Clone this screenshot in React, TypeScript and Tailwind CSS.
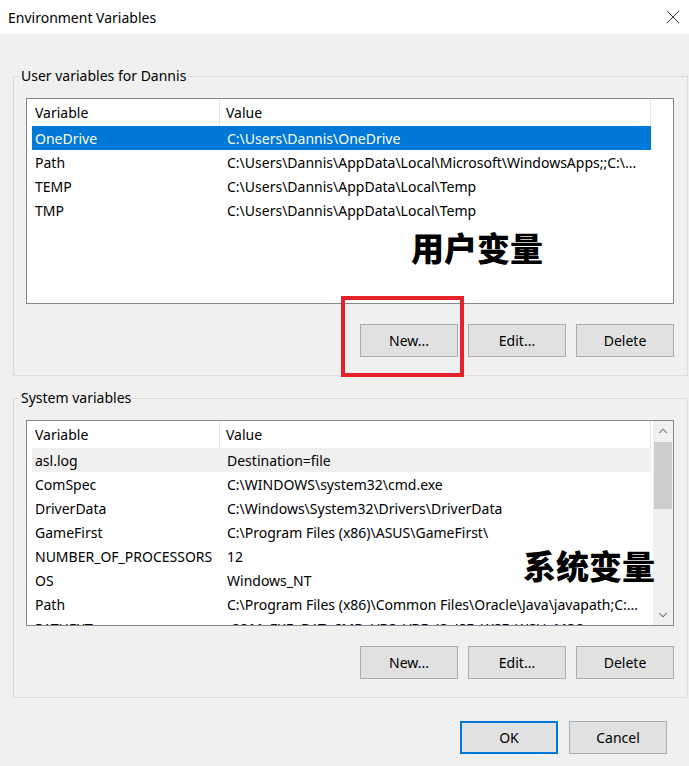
import { ChevronUp, ChevronDown } from 'lucide-react';

type Row = [string, string];

const userVars: Row[] = [
  ['OneDrive', 'C:\\Users\\Dannis\\OneDrive'],
  ['Path', 'C:\\Users\\Dannis\\AppData\\Local\\Microsoft\\WindowsApps;;C:\\...'],
  ['TEMP', 'C:\\Users\\Dannis\\AppData\\Local\\Temp'],
  ['TMP', 'C:\\Users\\Dannis\\AppData\\Local\\Temp'],
];

const systemVars: Row[] = [
  ['asl.log', 'Destination=file'],
  ['ComSpec', 'C:\\WINDOWS\\system32\\cmd.exe'],
  ['DriverData', 'C:\\Windows\\System32\\Drivers\\DriverData'],
  ['GameFirst', 'C:\\Program Files (x86)\\ASUS\\GameFirst\\'],
  ['NUMBER_OF_PROCESSORS', '12'],
  ['OS', 'Windows_NT'],
  ['Path', 'C:\\Program Files (x86)\\Common Files\\Oracle\\Java\\javapath;C:...'],
  ['PATHEXT', '.COM;.EXE;.BAT;.CMD;.VBS;.VBE;.JS;.JSE;.WSF;.WSH;.MSC'],
];

function WinButton({ label, primary = false }: { label: string; primary?: boolean }) {
  return (
    <button
      type="button"
      className={`h-[33px] w-[98px] bg-[#e1e1e1] text-[14px] text-black ${primary ? 'border-2 border-[#0078d7]' : 'border border-[#adadad]'}`}
    >
      {label}
    </button>
  );
}

function VarList({ rows, selected, hovered, scroll }: { rows: Row[]; selected?: number; hovered?: number; scroll?: boolean }) {
  return (
    <div className="relative h-[206px] overflow-hidden border border-[#828790] bg-white">
      <div className="w-[624px] pl-[5px]">
        <div className="flex h-[27px] items-center">
          <div className="flex h-full w-[188px] items-center border-r border-[#e5e5e5] pl-[3px]">Variable</div>
          <div className="flex h-full w-[431px] items-center border-r border-[#e5e5e5] pl-[6px]">Value</div>
        </div>
        {rows.map(([name, value], i) => (
          <div
            key={name + i}
            className={`flex h-[24px] w-[619px] items-center whitespace-nowrap ${i === selected ? 'bg-[#0078d7] text-white' : i === hovered ? 'bg-[#f0f0f0]' : ''}`}
          >
            <div className="w-[188px] pl-[3px]">{name}</div>
            <div className="w-[431px] overflow-hidden pl-[7px]">{value}</div>
          </div>
        ))}
      </div>
      {scroll && (
        <div className="absolute right-0 top-0 flex h-full w-[20px] flex-col items-center bg-[#f0f0f0]">
          <div className="flex h-[20px] w-full items-center justify-center text-[#606060]">
            <ChevronUp size={14} strokeWidth={1.75} />
          </div>
          <div className="mt-[1px] h-[67px] w-[18px] bg-[#cdcdcd]" />
          <div className="flex-1" />
          <div className="flex h-[20px] w-full items-center justify-center text-[#606060]">
            <ChevronDown size={14} strokeWidth={1.75} />
          </div>
        </div>
      )}
    </div>
  );
}

function Group({ title, children }: { title: string; children: React.ReactNode }) {
  return (
    <fieldset className="ml-[13px] w-[675px] border border-[#dcdcdc] pb-[18px] pl-[12px] pr-[13px]">
      <legend className="-ml-[7px] px-[2px] leading-[20px]">{title}</legend>
      <div className="mt-[12px]">{children}</div>
    </fieldset>
  );
}

export default function App() {
  return (
    <div
      className="relative h-[766px] w-[689px] overflow-hidden bg-[#f0f0f0] text-[14px] text-black"
      style={{ fontFamily: '"Segoe UI", "Noto Sans", "Noto Sans CJK SC", sans-serif' }}
    >
      <div className="flex h-[34px] items-center justify-between bg-white pl-[8px] pr-[9px]">
        <span className="text-[14px]">Environment Variables</span>
        <svg width="14" height="14" viewBox="0 0 14 14" className="text-[#333]">
          <path d="M1 1 L13 13 M13 1 L1 13" stroke="currentColor" strokeWidth="1" fill="none" />
        </svg>
      </div>

      <div className="mt-[32px]">
        <Group title="User variables for Dannis">
          <VarList rows={userVars} selected={0} />
          <div className="mt-[20px] flex justify-end gap-[10px]">
            <WinButton label="New..." />
            <WinButton label="Edit..." />
            <WinButton label="Delete" />
          </div>
        </Group>
      </div>

      <div className="mt-[12px]">
        <Group title="System variables">
          <VarList rows={systemVars} hovered={0} scroll />
          <div className="mt-[20px] flex justify-end gap-[10px]">
            <WinButton label="New..." />
            <WinButton label="Edit..." />
            <WinButton label="Delete" />
          </div>
        </Group>
      </div>

      <div className="mt-[23px] flex justify-end gap-[11px] pr-[22px]">
        <WinButton label="OK" primary />
        <WinButton label="Cancel" />
      </div>

      {/* annotations over the screenshot */}
      <div className="absolute left-[341px] top-[296px] h-[81px] w-[123px] border-4 border-[#e3222a]" />
      <div className="absolute left-[411px] top-[228px] text-[33px] font-black leading-[42px]">用户变量</div>
      <div className="absolute left-[523px] top-[546px] text-[33px] font-black leading-[42px]">系统变量</div>
    </div>
  );
}
